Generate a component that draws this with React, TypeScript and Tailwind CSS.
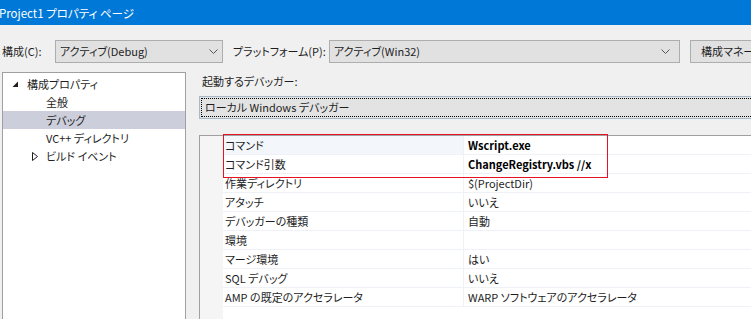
import React from "react";

const font = { fontFamily: "'Noto Sans CJK JP', 'Noto Sans', sans-serif" };

function Chevron() {
  return (
    <svg width="9" height="5" viewBox="0 0 9 5" className="shrink-0">
      <polyline points="0.5,0.5 4.5,4.5 8.5,0.5" fill="none" stroke="#555" strokeWidth="1" />
    </svg>
  );
}

const rows: { label: string; value: string; bold?: boolean }[] = [
  { label: "コマンド", value: "Wscript.exe", bold: true },
  { label: "コマンド引数", value: "ChangeRegistry.vbs //x", bold: true },
  { label: "作業ディレクトリ", value: "$(ProjectDir)" },
  { label: "アタッチ", value: "いいえ" },
  { label: "デバッガーの種類", value: "自動" },
  { label: "環境", value: "" },
  { label: "マージ環境", value: "はい" },
  { label: "SQL デバッグ", value: "いいえ" },
  { label: "AMP の既定のアクセラレータ", value: "WARP ソフトウェアのアクセラレータ" },
];

export default function App() {
  return (
    <div
      className="w-[751px] h-[319px] bg-[#f0f0f0] overflow-hidden flex flex-col text-[11px] text-[#1e1e1e] [font-feature-settings:'palt']"
      style={font}
    >
      {/* title bar */}
      <div className="h-[25px] shrink-0 bg-[#0078d7] text-white text-[11.5px] flex items-center leading-[16px]">
        <span className="-ml-[1px]">Project1 プロパティ ページ</span>
      </div>

      {/* configuration row */}
      <div className="mt-[15px] h-[23px] shrink-0 flex items-center whitespace-nowrap">
        <span className="ml-[2px] w-[53px] shrink-0">構成(C):</span>
        <div className="w-[168px] shrink-0 h-[23px] border border-[#adadad] bg-[#e1e1e1] flex items-center pl-[4px] pr-[4px]">
          <span className="flex-1">アクティブ(Debug)</span>
          <Chevron />
        </div>
        <span className="ml-[10px] w-[96px] shrink-0">プラットフォーム(P):</span>
        <div className="w-[351px] shrink-0 h-[23px] border border-[#adadad] bg-[#e1e1e1] flex items-center pl-[4px] pr-[9px]">
          <span className="flex-1">アクティブ(Win32)</span>
          <Chevron />
        </div>
        <div className="ml-[10px] w-[100px] h-[23px] border border-[#adadad] bg-[#e1e1e1] flex items-center pl-[10px] shrink-0">
          構成マネージャー(O)...
        </div>
      </div>

      {/* main */}
      <div className="mt-[9px] flex flex-1 min-h-0">
        {/* tree */}
        <div className="ml-[2px] w-[184px] shrink-0 bg-white border border-[#a0a0a0] border-b-0 pt-[2px] leading-[18px] whitespace-nowrap">
          <div className="h-[18px] flex items-center">
            <svg width="7" height="7" viewBox="0 0 7 7" className="ml-[9px] mr-[8px]">
              <polygon points="6,0.5 6,6 0.5,6" fill="#1e1e1e" />
            </svg>
            <span>構成プロパティ</span>
          </div>
          <div className="h-[18px] pl-[43px]">全般</div>
          <div className="h-[18px] pl-[43px] bg-[#cccedb]">デバッグ</div>
          <div className="h-[18px] pl-[43px]">VC++ ディレクトリ</div>
          <div className="h-[18px] flex items-center">
            <svg width="6" height="9" viewBox="0 0 6 9" className="ml-[29px] mr-[8px]">
              <polygon points="0.5,0.5 5.5,4.5 0.5,8.5" fill="none" stroke="#1e1e1e" strokeWidth="1" />
            </svg>
            <span>ビルド イベント</span>
          </div>
        </div>

        {/* right side */}
        <div className="ml-[13px] w-[560px] shrink-0 flex flex-col whitespace-nowrap">
          <div className="h-[18px] leading-[18px] pl-[3px]">起動するデバッガー:</div>
          <div className="mt-[6px] h-[23px] border border-[#a9b8c8] bg-[#e3e3e3] p-[1px]">
            <div className="h-full border border-dotted border-black flex items-center pl-[3px]">
              ローカル Windows デバッガー
            </div>
          </div>

          {/* property grid */}
          <div className="mt-[16px] flex-1 border-t border-l border-[#a0a0a0] bg-white relative flex">
            <div className="w-[23px] shrink-0 bg-[#f5f5f5]" />
            <div className="flex-1 flex flex-col">
              {rows.map((r, i) => (
                <div key={i} className="h-[19px] flex border-b border-[#eef1f6] leading-[18px]">
                  <div className={`w-[241px] shrink-0 pl-[2px] border-r border-[#eef1f6] ${i === 0 ? "bg-[#f3f6fb]" : ""}`}>
                    {r.label}
                  </div>
                  <div className={`pl-[4px] ${r.bold ? "font-bold text-black" : ""}`}>{r.value}</div>
                </div>
              ))}
            </div>
            <div className="absolute left-[23px] top-[-2px] w-[385px] h-[44px] border border-[#e81123]" />
          </div>
        </div>
      </div>
    </div>
  );
}
